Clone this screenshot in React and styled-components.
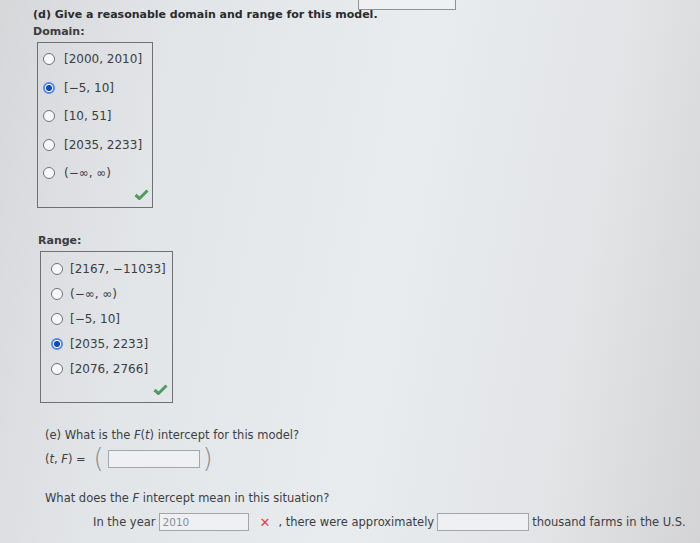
import React from 'react'
import styled, { createGlobalStyle } from 'styled-components'

const GlobalStyle = createGlobalStyle`
  html, body {
    margin: 0;
    padding: 0;
  }
  body {
    width: 700px;
    height: 543px;
    overflow: hidden;
    font-family: "DejaVu Sans", Verdana, sans-serif;
    color: #2e3033;
    background: linear-gradient(100deg, #d6d7d9 0%, #e2e5e8 22%, #e8ecef 55%, #e2e4e6 80%, #d4d4d6 100%);
  }
`

const Page = styled.div`
  padding: 6px 0 0 33px;
`

const TopStrip = styled.div`
  position: relative;
  height: 0;
`
const CutBox = styled.div`
  position: absolute;
  left: 325px;
  top: -18px;
  width: 96px;
  height: 20px;
  border: 1px solid #8f9297;
  background: #eef0f2;
`

const Heading = styled.div`
  font-size: 11px;
  font-weight: bold;
  color: #2a2b2d;
  line-height: 17px;
`

const Label = styled.div`
  font-size: 11px;
  font-weight: bold;
  color: #3a3c3f;
  line-height: 17px;
  margin-left: ${p => p.$indent || 0}px;
  margin-top: ${p => p.$top || 0}px;
`

const ChoiceBox = styled.div`
  width: ${p => p.$width}px;
  margin-left: ${p => p.$indent}px;
  margin-top: 2px;
  border: 1px solid #6e7074;
  padding: ${p => p.$pad}px 0 0 ${p => p.$left}px;
  box-sizing: border-box;
  height: ${p => p.$height}px;
  display: flex;
  flex-direction: column;
`

const Option = styled.div`
  display: flex;
  align-items: center;
  gap: ${p => p.$gap}px;
  height: ${p => p.$row}px;
  font-size: 12px;
  color: #3b3d40;
`

const Radio = styled.span`
  width: 12px;
  height: 12px;
  border-radius: 50%;
  box-sizing: border-box;
  border: 1.5px solid #6f7277;
  background: #f7f8f9;
  flex: none;
  display: inline-flex;
  align-items: center;
  justify-content: center;
  ${p => p.$on && `
    border: 2px solid #4f8ce8;
    background: #fff;
    &::after {
      content: "";
      width: 6px;
      height: 6px;
      border-radius: 50%;
      background: #1546b8;
    }
  `}
`

const CheckRow = styled.div`
  display: flex;
  justify-content: flex-end;
  padding-right: ${p => p.$right}px;
  margin-top: auto;
  margin-bottom: 7px;
`

const PartE = styled.div`
  margin: 24px 0 0 12px;
  font-size: 11.5px;
  color: #3c3e42;
`

const Line = styled.div`
  display: flex;
  align-items: center;
  height: ${p => p.$h || 16}px;
  margin-top: ${p => p.$top || 0}px;
  margin-left: ${p => p.$indent || 0}px;
  white-space: pre;
`

const Ital = styled.i`
  font-family: "DejaVu Sans", Verdana, sans-serif;
`

const Paren = styled.span`
  font-size: 26px;
  font-weight: 200;
  color: #8a8d91;
  line-height: 1;
  margin: 0 ${p => p.$r}px 0 ${p => p.$l}px;
  position: relative;
  top: -1px;
`

const Input = styled.span`
  display: inline-block;
  width: ${p => p.$w}px;
  height: 18px;
  box-sizing: border-box;
  border: 1px solid #a3a6ab;
  background: #eef0f3;
  font-size: 10.5px;
  color: #8b8e93;
  line-height: 16px;
  padding-left: 3px;
  margin: 0 ${p => p.$mr ?? 3}px 0 ${p => p.$ml ?? 3}px;
`

const Cross = styled.span`
  color: #d6474f;
  font-weight: bold;
  font-size: 13px;
  margin: 0 8px 0 8px;
`

const Check = () => (
  <svg width="15" height="11" viewBox="0 0 15 11">
    <path d="M1.5 6 L5.5 9.5 L13.5 1.5" fill="none" stroke="#4f9a5c" strokeWidth="3" strokeLinejoin="round" />
  </svg>
)

const domain = ['[2000, 2010]', '[−5, 10]', '[10, 51]', '[2035, 2233]', '(−∞, ∞)']
const range = ['[2167, −11033]', '(−∞, ∞)', '[−5, 10]', '[2035, 2233]', '[2076, 2766]']

const App = () => {
  return (
    <Page>
      <GlobalStyle />
      <TopStrip><CutBox /></TopStrip>
      <Heading>(d) Give a reasonable domain and range for this model.</Heading>
      <Label>Domain:</Label>
      <ChoiceBox $width={116} $indent={4} $height={166} $pad={2} $left={5}>
        {domain.map((d, i) => (
          <Option key={d} $row={28.5} $gap={9}>
            <Radio $on={i === 1} />
            <span>{d}</span>
          </Option>
        ))}
        <CheckRow $right={3}><Check /></CheckRow>
      </ChoiceBox>
      <Label $indent={5} $top={24}>Range:</Label>
      <ChoiceBox $width={133} $indent={7} $height={152} $pad={4} $left={10}>
        {range.map((d, i) => (
          <Option key={d} $row={25} $gap={7}>
            <Radio $on={i === 3} />
            <span>{d}</span>
          </Option>
        ))}
        <CheckRow $right={4}><Check /></CheckRow>
      </ChoiceBox>
      <PartE>
        <Line>(e) What is the <Ital>F</Ital>(<Ital>t</Ital>) intercept for this model?</Line>
        <Line $h={32}>
          (<Ital>t</Ital>, <Ital>F</Ital>) = <Paren $l={4} $r={4}>(</Paren>
          <Input $w={92} $ml={0} $mr={0} />
          <Paren $l={3} $r={0}>)</Paren>
        </Line>
        <Line $top={15}>What does the <Ital>F</Ital> intercept mean in this situation?</Line>
        <Line $h={32} $indent={48}>
          In the year
          <Input $w={90}>2010</Input>
          <Cross>✕</Cross>
          , there were approximately
          <Input $w={92} />
          thousand farms in the U.S.
        </Line>
      </PartE>
    </Page>
  )
}

export default App
